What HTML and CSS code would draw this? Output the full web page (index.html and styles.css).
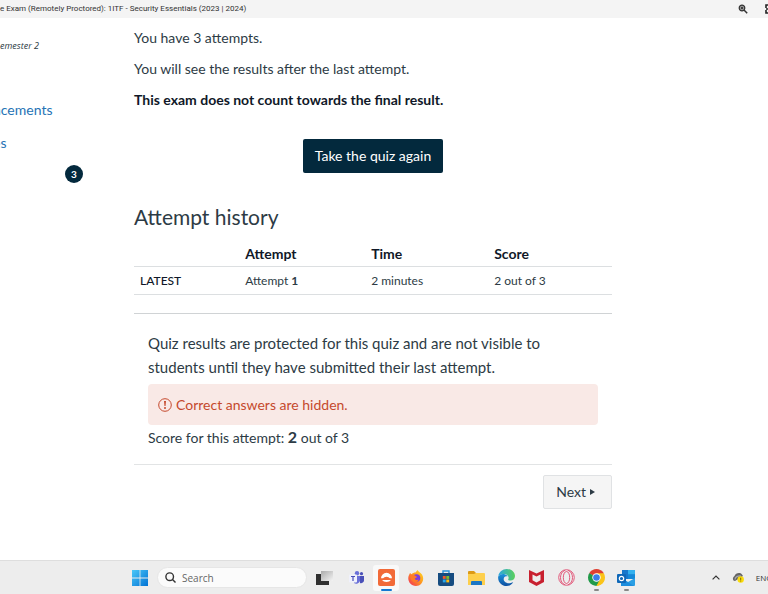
FILE: index.html
```
<!DOCTYPE html>
<html lang="en">
<head>
    <meta charset="UTF-8">
    <meta name="viewport" content="width=device-width, initial-scale=1.0">
    <title>Security Essentials</title>
    <link rel="stylesheet" href="styles.css">
</head>
<body>
    <header class="titlebar">
        <span class="title">e Exam (Remotely Proctored): 1ITF - Security Essentials (2023 | 2024)</span>
        <div class="tools">
            <button aria-label="Zoom">
                <svg width="10" height="10" viewBox="0 0 10 10"><circle cx="4" cy="4" r="2.8" fill="#999" stroke="#333" stroke-width="1.2"/><path d="M3 4h2M4 3v2" stroke="#222" stroke-width="1"/><path d="M6 6l3.2 3.2" stroke="#333" stroke-width="1.5"/></svg>
            </button>
            <button aria-label="Full screen">
                <svg width="10" height="10" viewBox="0 0 10 10" fill="none" stroke="#222" stroke-width="1.6"><path d="M3.5 1H1v3M6.500 1H9v3M3.500 9H1V6M6.500 9H9V6M1 5h2"/></svg>
            </button>
        </div>
    </header>

    <div class="page">
        <nav class="sidebar">
            <p class="term">emester 2</p>
            <a href="#">ncements</a>
            <a href="#">es</a>
            <span class="badge">3</span>
        </nav>

        <main class="content">
            <p>You have 3 attempts.</p>
            <p>You will see the results after the last attempt.</p>
            <p><strong>This exam does not count towards the final result.</strong></p>
            <div class="take">
                <button class="btn-primary">Take the quiz again</button>
            </div>

            <h2>Attempt history</h2>
            <table class="history">
                <thead>
                    <tr><th></th><th>Attempt</th><th>Time</th><th>Score</th></tr>
                </thead>
                <tbody>
                    <tr><th class="latest">LATEST</th><td>Attempt <b>1</b></td><td>2 minutes</td><td>2 out of 3</td></tr>
                </tbody>
            </table>

            <section class="results">
                <p class="protected">Quiz results are protected for this quiz and are not visible to students until they have submitted their last attempt.</p>
                <div class="alert">
                    <svg width="14" height="14" viewBox="0 0 14 14"><circle cx="7" cy="7" r="6.300" fill="none" stroke="#c5492d"/><path d="M6 3h2l-.5 5h-1z" fill="#c5492d"/><circle cx="7" cy="10" r="1" fill="#c5492d"/></svg>
                    <span>Correct answers are hidden.</span>
                </div>
                <p class="score">Score for this attempt: <b>2</b> out of 3</p>
            </section>

            <div class="pager">
                <button class="btn-next">Next
                    <svg width="5" height="6" viewBox="0 0 5 6"><path d="M0 0l5 3-5 3z" fill="#2d3b45"/></svg>
                </button>
            </div>
        </main>
    </div>

    <footer class="taskbar">
        <button class="app" aria-label="Start">
            <svg width="16" height="16" viewBox="0 0 16 16">
                <defs><linearGradient id="win" x1="0" y1="0" x2="16" y2="16" gradientUnits="userSpaceOnUse"><stop offset="0" stop-color="#4cc8f8"/><stop offset="1" stop-color="#0272d4"/></linearGradient></defs>
                <path d="M0 0h7.600v7.600H0zM8.400 0H16v7.600H8.400zM0 8.400h7.600V16H0zM8.400 8.400H16V16H8.400z" fill="url(#win)"/>
            </svg>
        </button>
        <label class="search">
            <svg width="11" height="11" viewBox="0 0 11 11" fill="none" stroke="#333" stroke-width="1.400"><circle cx="4.700" cy="4.700" r="3.800"/><path d="M7.500 7.500l3 3"/></svg>
            <input type="text" placeholder="Search" aria-label="Search">
        </label>
        <button class="app" aria-label="Task view">
            <svg width="20" height="18" viewBox="0 0 20 18">
                <defs><linearGradient id="tv" x1="0" y1="0" x2="1" y2="1"><stop offset="0" stop-color="#aaa"/><stop offset="1" stop-color="#f4f4f4"/></linearGradient></defs>
                <path d="M0 5h13v11H0z" fill="#303030"/><path d="M5 2h12v10H5z" fill="url(#tv)"/>
            </svg>
        </button>
        <button class="app" aria-label="Teams">
            <svg width="16" height="16" viewBox="0 0 16 16">
                <circle cx="9" cy="3.200" r="2.200" fill="#6a70d8"/><circle cx="13.500" cy="3.700" r="1.600" fill="#4a50b8"/>
                <path d="M6 6h6v5a4 4 0 0 1-6 2z" fill="#6a70d8"/><path d="M12 6h4v4a3 3 0 0 1-4 3z" fill="#4a50b8"/>
                <rect x="1" y="4.500" width="8" height="8" rx="1" fill="#f0f1fc"/><path d="M3 6.500h4M5 6.500v4.500" stroke="#4a50b8" stroke-width="1.200"/>
            </svg>
        </button>
        <button class="app active" aria-label="Proctoring browser">
            <svg width="17" height="17" viewBox="0 0 17 17">
                <rect width="17" height="17" rx="2" fill="#f26a38"/>
                <path d="M3 9.300a5.500 5.500 0 0 1 11 0h-2.200a3.500 2.500 0 0 0-6.600 0z" fill="#fff"/>
                <path d="M4 11h9a5.300 4.500 0 0 1-9 0z" fill="#fff"/>
            </svg>
        </button>
        <button class="app" aria-label="Firefox">
            <svg width="16" height="16" viewBox="0 0 16 16">
                <defs><linearGradient id="ff" x1="1" y1="0" x2="0" y2="1"><stop offset="0" stop-color="#ffe226"/><stop offset=".45" stop-color="#ff9a1f"/><stop offset="1" stop-color="#f0255c"/></linearGradient></defs>
                <path d="M2 3l1.500 1.200C4.500 3 6 2.500 7.500 2.500L9.500 0c1 2 3 2.500 4.500 4.500C17 9 14 16 8 16S-1 10 .8 5.500z" fill="url(#ff)"/>
                <circle cx="8.500" cy="8" r="3.800" fill="#7a3ee0"/>
                <path d="M2.500 5.500c2-1.500 4-.8 5 .5l1.500.8c0 1.200-1.800 1-2.300 2 .8 1.300 2.500 1.500 4 .8-.5 2.500-3.700 3.300-5.700 1.900-2-1.600-3.200-3.700-2.500-6z" fill="#ff7a28"/>
            </svg>
        </button>
        <button class="app" aria-label="Microsoft Store">
            <svg width="16" height="16" viewBox="0 0 16 16">
                <path d="M5 4V1h6v3" fill="none" stroke="#2b93d8" stroke-width="1.400"/><path d="M0 3h16v11a2 2 0 0 1-2 2H2a2 2 0 0 1-2-2z" fill="#164c80"/>
                <path d="M4.800 6h2.900v2.900H4.800z" fill="#f1592a"/><path d="M8.300 6h2.900v2.900H8.300z" fill="#7fba2b"/><path d="M4.800 9.500h2.900v2.900H4.800z" fill="#28a8ea"/><path d="M8.300 9.500h2.900v2.900H8.300z" fill="#fdb913"/>
            </svg>
        </button>
        <button class="app" aria-label="File Explorer">
            <svg width="17" height="16" viewBox="0 0 17 16">
                <path d="M0 2a1 1 0 0 1 1-1h5l2 2h8v4H0z" fill="#dc9a16"/><path d="M0 4h6l2-1h8a1 1 0 0 1 1 1v11H0z" fill="#fdcf4c"/><path d="M3 15v-3a1 1 0 0 1 1-1h9a1 1 0 0 1 1 1v3z" fill="#1976c5"/>
            </svg>
        </button>
        <button class="app" aria-label="Edge">
            <svg width="17" height="17" viewBox="0 0 17 17">
                <defs>
                    <linearGradient id="edge1" x1="0" y1="0" x2="1" y2="0"><stop offset="0" stop-color="#2aa6e0"/><stop offset="1" stop-color="#5ad05a"/></linearGradient>
                    <linearGradient id="edge2" x1="0" y1="0" x2="0" y2="1"><stop offset="0" stop-color="#1b94dc"/><stop offset="1" stop-color="#0f4fa0"/></linearGradient>
                </defs>
                <path d="M.3 7C1 3 4.500 0 8.700 0c5 0 8.300 3.500 8.300 7 0 3-2.200 4.500-4.500 4.500-1.800 0-2.700-.7-2.200-1.500C11.500 8 9.500 5 6 5 3.500 5 1.500 6 .3 7z" fill="url(#edge1)"/>
                <path d="M.2 7.500C1.500 5.500 4 4.600 6 5c2 .3 3.300 1.500 3.500 2.500-2-1-4 .5-3.800 3 .2 2.500 3.800 4.500 7 3.500 1-.3 2-.8 2.500-1C14 15.500 11.500 17 8.500 17 4 17-.5 13 .2 7.500z" fill="url(#edge2)"/>
            </svg>
        </button>
        <button class="app" aria-label="McAfee">
            <svg width="15" height="16" viewBox="0 0 15 16">
                <path d="M0 0l7.500 3.500L15 0v12l-7.500 4L0 12z" fill="#c8202f"/><path d="M3.500 4.500l4 2 4-2v5.800l-4 2.200-4-2.200z" fill="#eee"/>
            </svg>
        </button>
        <button class="app" aria-label="Opera">
            <svg width="17" height="17" viewBox="0 0 17 17" fill="none" stroke="#e2587a">
                <circle cx="8.500" cy="8.500" r="7.800"/><ellipse cx="8.500" cy="8.500" rx="3.200" ry="6"/><path d="M7 1.300c-6 2-6 12.500 0 14.500M10 1.300c6 2 6 12.500 0 14.500"/>
            </svg>
        </button>
        <button class="app running" aria-label="Chrome">
            <svg width="17" height="17" viewBox="0 0 17 17">
                <path d="M8.500 8.500L1.140 4.250A8.500 8.500 0 0 1 15.860 4.250z" fill="#df3f32"/>
                <path d="M8.500 8.500L15.860 4.250A8.500 8.500 0 0 1 8.500 17z" fill="#fbc418"/>
                <path d="M8.500 8.500V17A8.500 8.500 0 0 1 1.140 4.250z" fill="#219a4a"/>
                <path d="M8.500 4.300h7.400l-3.700 6.500z" fill="#fbc418"/><path d="M1.140 4.250L4.900 10.600l3.600-2.100z" fill="#219a4a"/><path d="M12.200 10.600L8.500 17l-3.600-6.400z" fill="#219a4a"/>
                <path d="M12.200 10.600L8.500 17a8.500 8.500 0 0 0 4-1.200z" fill="#fbc418"/>
                <circle cx="8.500" cy="8.500" r="4.200" fill="#fff"/><circle cx="8.500" cy="8.500" r="3.300" fill="#3b7de8"/>
            </svg>
        </button>
        <button class="app running" aria-label="Outlook">
            <svg width="18" height="16" viewBox="0 0 18 16">
                <path d="M5 0h13v9H5z" fill="#1677cc"/><path d="M11 0h7v4.500h-7z" fill="#32b0ee"/><path d="M11 4.500h7V9h-7z" fill="#1388d8"/><path d="M4 8l7 4 7-4v7a1 1 0 0 1-1 1H4z" fill="#2a9fe4"/><path d="M4 8l13 8H4z" fill="#1c8ddd"/>
                <rect y="4" width="9" height="9" rx="1" fill="#0f68b8"/><circle cx="4.500" cy="8.500" r="2.200" fill="none" stroke="#fff" stroke-width="1.200"/>
            </svg>
        </button>
        <div class="tray">
            <svg width="8" height="5" viewBox="0 0 8 5" fill="none" stroke="#333" stroke-width="1.200"><path d="M.6 4.400L4 1l3.400 3.400"/></svg>
            <svg width="12" height="11" viewBox="0 0 12 11">
                <path d="M1.500 8.500C0 6 2 4.500 2.500 4c1-3 5.500-4 7.500-1.500l1 1.500-8 5z" fill="#666"/><path d="M3 7.500c0-2.500 3-4 6-3.500" fill="none" stroke="#aaa" stroke-width="1.200"/>
                <circle cx="8.700" cy="7.500" r="3.200" fill="#fbdc0a"/><path d="M8.700 5.700v2.200M8.700 8.500v1" stroke="#7a6500"/>
            </svg>
            <span>ENG</span>
        </div>
    </footer>
</body>
</html>
```

FILE: styles.css
```
* {
    margin: 0;
    padding: 0;
    box-sizing: border-box;
}

body {
    display: flex;
    flex-direction: column;
    min-height: 100vh;
    overflow-x: hidden;
    background: #fff;
    color: #2d3b45;
    font-family: Lato, sans-serif;
    font-size: 14px;
    line-height: 21px;
}

button {
    border: 0;
    background: none;
    font: inherit;
    cursor: pointer;
}

svg {
    display: block;
    flex: none;
}

.titlebar {
    display: flex;
    justify-content: space-between;
    height: 18px;
    overflow: hidden;
    background: #f4f4f4;
    color: #333;
    font-family: Roboto, sans-serif;
    font-size: 8px;
    line-height: 18px;
    white-space: nowrap;
}

.tools {
    display: flex;
    align-items: center;
    gap: 17px;
    margin-right: -7px;
}

.page {
    flex: 1;
    display: grid;
    grid-template-columns: 134px 1fr 156px;
    padding-top: 9px;
}

.sidebar {
    display: flex;
    flex-direction: column;
    align-items: flex-start;
    padding-top: 8px;
}

.term {
    margin-bottom: 43px;
    font-family: "Open Sans", sans-serif;
    font-size: 9px;
    font-style: italic;
}

.sidebar a {
    margin-left: -7px;
    margin-bottom: 12px;
    color: #2573b5;
    text-decoration: none;
}

.badge {
    width: 18px;
    height: 18px;
    margin-left: 65px;
    border-radius: 50%;
    background: #03293d;
    color: #fff;
    font-size: 10px;
    font-weight: bold;
    line-height: 18px;
    text-align: center;
}

.content > p {
    margin-bottom: 10px;
}

strong {
    color: #101828;
}

.take {
    margin: 29px 0 31px;
    text-align: center;
}

.btn-primary {
    height: 34px;
    padding: 0 12px 2px;
    border-radius: 2px;
    background: #03293d;
    color: #fff;
}

h2 {
    margin-bottom: 11px;
    font-size: 21px;
    font-weight: 400;
    line-height: 26px;
}

.history {
    width: 100%;
    border-collapse: collapse;
    table-layout: fixed;
    font-size: 12px;
    line-height: 17px;
    text-align: left;
}

.history th,
.history td {
    padding: 5px 6px;
    border-bottom: 1px solid #dcdfe1;
}

.history thead th {
    padding: 4px 6px;
    color: #101828;
    font-size: 14px;
}

.history th:first-child {
    width: 22%;
}

.history th:nth-child(2) {
    width: 126px;
}

.history th:nth-child(3) {
    width: 123px;
}

.history .latest {
    color: #101828;
    font-weight: 500;
}

.results {
    margin-top: 18px;
    padding: 17px 14px 16px;
    border-top: 1px solid #d0d3d5;
    border-bottom: 1px solid #e2e4e5;
}

.protected {
    margin-bottom: 5px;
    font-size: 15px;
    line-height: 24px;
}

.alert {
    display: flex;
    align-items: center;
    gap: 4px;
    height: 41px;
    padding: 0 10px;
    border-radius: 4px;
    background: #f9e9e6;
    color: #c5492d;
}

.score {
    margin-top: 1px;
}

.score b {
    font-size: 16px;
}

.pager {
    display: flex;
    justify-content: flex-end;
    padding-top: 10px;
}

.btn-next {
    display: flex;
    align-items: center;
    gap: 4px;
    height: 34px;
    padding: 0 16px 2px 12px;
    border: 1px solid #e0e2e4;
    border-radius: 2px;
    background: #f5f5f5;
    color: #2d3b45;
}

.btn-next svg {
    margin-top: 2px;
}

.taskbar {
    display: flex;
    align-items: center;
    height: 34px;
    padding-left: 125px;
    border-top: 1px solid #dedede;
    background: #ededed;
}

.app {
    position: relative;
    display: flex;
    align-items: center;
    justify-content: center;
    flex: none;
    width: 30px;
    height: 26px;
}

.app.active {
    width: 26px;
    margin: 0 2px;
    border-radius: 3px;
    background: #f9f9f9;
}

.app.active::after,
.app.running::after {
    content: "";
    position: absolute;
    bottom: 0;
    width: 5px;
    height: 2px;
    border-radius: 1px;
    background: #888;
}

.app.active::after {
    width: 11px;
    background: #1279d3;
}

.search {
    display: flex;
    align-items: center;
    gap: 6px;
    width: 150px;
    height: 21px;
    margin: 0 4px 0 2px;
    padding: 0 7px;
    border: 1px solid #e6e6e6;
    border-radius: 11px;
    background: #fbfbfb;
}

.search input {
    width: 100%;
    border: 0;
    outline: 0;
    background: none;
    font-family: "Open Sans", sans-serif;
    font-size: 10px;
}

.search input::placeholder {
    color: #666;
}

.tray {
    display: flex;
    align-items: center;
    gap: 12px;
    margin-left: auto;
    margin-right: -4px;
    color: #333;
    font-family: "Open Sans", sans-serif;
    font-size: 8px;
}
```
